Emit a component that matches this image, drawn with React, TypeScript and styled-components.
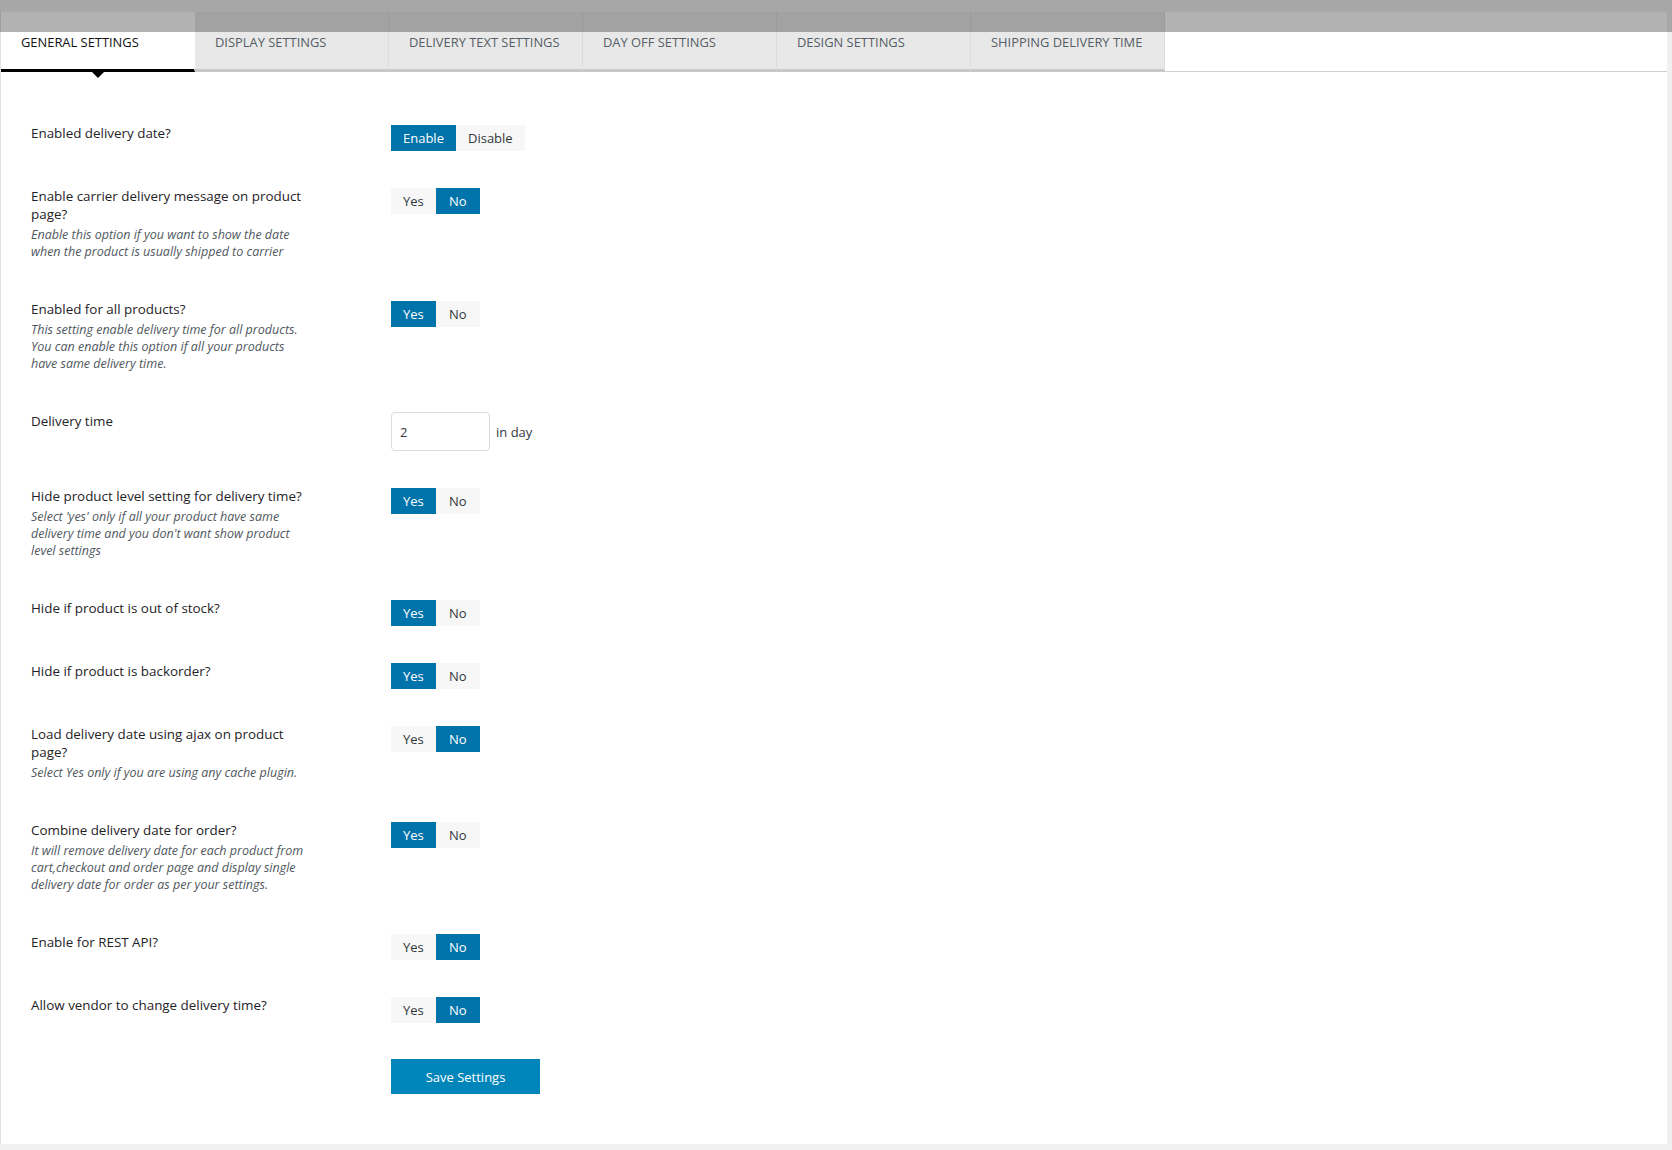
import React from "react";
import styled, { createGlobalStyle, css } from "styled-components";

const GlobalStyle = createGlobalStyle`
  html, body {
    margin: 0;
    padding: 0;
    background: #f0f0f1;
  }
  body {
    font-family: "Open Sans", "Noto Sans", Arial, sans-serif;
    color: #1f2327;
  }
  * { box-sizing: border-box; }
`;

const Page = styled.div`
  position: relative;
  padding: 12px 5px 6px 0;
  min-height: 1150px;
`;

const Overlay = styled.div`
  position: absolute;
  top: 0;
  left: 0;
  right: 0;
  height: 32px;
  background: rgba(0, 0, 0, 0.3);
  pointer-events: none;
  z-index: 10;
`;

const Panel = styled.div`
  background: #fff;
  border-left: 1px solid #e2e2e2;
  min-height: 1132px;
`;

const TabBar = styled.div`
  display: flex;
  border-bottom: 1px solid #d0d0d0;
  height: 60px;
`;

const Tab = styled.div<{ $active?: boolean }>`
  position: relative;
  width: 194px;
  height: 60px;
  padding: 21px 0 0 20px;
  font-size: 12.9px;
  line-height: 18px;
  text-transform: uppercase;
  white-space: nowrap;
  border-bottom: 3px solid #c8c8c8;
  border-right: 1px solid #dcdcdc;
  background: #e8e8e8;
  color: #555d66;
  margin-bottom: -1px;
  ${(p) =>
    p.$active &&
    css`
      background: #fff;
      color: #111;
      border-bottom-color: #000;
      border-right-color: #fff;
      &::after {
        content: "";
        position: absolute;
        left: 50%;
        bottom: -9px;
        margin-left: -6px;
        border-left: 6px solid transparent;
        border-right: 6px solid transparent;
        border-top: 6px solid #000;
      }
    `}
`;

const Form = styled.div`
  padding: 32px 0 0 30px;
`;

const Row = styled.div`
  display: grid;
  grid-template-columns: 360px 1fr;
  align-items: start;
`;

const LabelCell = styled.div`
  padding: 20px 0;
`;

const Label = styled.div`
  font-size: 13.4px;
  line-height: 18px;
  color: #1f2327;
`;

const Desc = styled.div`
  margin-top: 3px;
  font-size: 12.5px;
  line-height: 17px;
  font-style: italic;
  color: #50575e;
`;

const ControlCell = styled.div`
  padding: 21px 0 16px;
  display: flex;
  align-items: center;
`;

const Toggle = styled.div`
  display: inline-flex;
  height: 26px;
`;

const ToggleBtn = styled.span<{ $on?: boolean }>`
  display: inline-block;
  min-width: 44px;
  height: 26px;
  line-height: 26px;
  padding: 0 12px;
  text-align: center;
  font-size: 13px;
  background: ${(p) => (p.$on ? "#0073aa" : "#f7f7f7")};
  color: ${(p) => (p.$on ? "#fff" : "#32373c")};
`;

const NumberInput = styled.input`
  margin-top: -1px;
  width: 99px;
  height: 39px;
  border: 1px solid #dcdcde;
  border-radius: 4px;
  padding: 0 8px;
  font-family: inherit;
  font-size: 13px;
  color: #32373c;
  background: #fff;
  outline: none;
`;

const Unit = styled.span`
  margin-left: 6px;
  font-size: 13px;
  color: #32373c;
`;

const SaveRow = styled.div`
  padding: 20px 0 0 360px;
`;

const SaveButton = styled.button`
  width: 149px;
  height: 35px;
  border: none;
  border-radius: 0;
  background: #0085ba;
  color: #fff;
  font-family: inherit;
  font-size: 13px;
  cursor: pointer;
`;

type Setting = {
  label: string[];
  desc?: string[];
  options?: [string, string];
  value?: 0 | 1;
  input?: string;
};

const tabs = [
  "General Settings",
  "Display Settings",
  "Delivery Text Settings",
  "Day Off Settings",
  "Design Settings",
  "Shipping Delivery Time",
];

const settings: Setting[] = [
  { label: ["Enabled delivery date?"], options: ["Enable", "Disable"], value: 0 },
  {
    label: ["Enable carrier delivery message on product", "page?"],
    desc: ["Enable this option if you want to show the date", "when the product is usually shipped to carrier"],
    options: ["Yes", "No"],
    value: 1,
  },
  {
    label: ["Enabled for all products?"],
    desc: [
      "This setting enable delivery time for all products.",
      "You can enable this option if all your products",
      "have same delivery time.",
    ],
    options: ["Yes", "No"],
    value: 0,
  },
  { label: ["Delivery time"], input: "2" },
  {
    label: ["Hide product level setting for delivery time?"],
    desc: [
      "Select 'yes' only if all your product have same",
      "delivery time and you don't want show product",
      "level settings",
    ],
    options: ["Yes", "No"],
    value: 0,
  },
  { label: ["Hide if product is out of stock?"], options: ["Yes", "No"], value: 0 },
  { label: ["Hide if product is backorder?"], options: ["Yes", "No"], value: 0 },
  {
    label: ["Load delivery date using ajax on product", "page?"],
    desc: ["Select Yes only if you are using any cache plugin."],
    options: ["Yes", "No"],
    value: 1,
  },
  {
    label: ["Combine delivery date for order?"],
    desc: [
      "It will remove delivery date for each product from",
      "cart,checkout and order page and display single",
      "delivery date for order as per your settings.",
    ],
    options: ["Yes", "No"],
    value: 0,
  },
  { label: ["Enable for REST API?"], options: ["Yes", "No"], value: 1 },
  { label: ["Allow vendor to change delivery time?"], options: ["Yes", "No"], value: 1 },
];

const Lines: React.FC<{ lines: string[] }> = ({ lines }) => (
  <>
    {lines.map((l, i) => (
      <React.Fragment key={i}>
        {i > 0 && <br />}
        {l}
      </React.Fragment>
    ))}
  </>
);

export default function App() {
  return (
    <>
      <GlobalStyle />
      <Page>
        <Overlay />
        <Panel>
          <TabBar>
            {tabs.map((t, i) => (
              <Tab key={t} $active={i === 0}>
                {t}
              </Tab>
            ))}
          </TabBar>
          <Form>
            {settings.map((s, i) => (
              <Row key={i}>
                <LabelCell>
                  <Label>
                    <Lines lines={s.label} />
                  </Label>
                  {s.desc && (
                    <Desc>
                      <Lines lines={s.desc} />
                    </Desc>
                  )}
                </LabelCell>
                <ControlCell>
                  {s.input !== undefined ? (
                    <>
                      <NumberInput type="text" defaultValue={s.input} />
                      <Unit>in day</Unit>
                    </>
                  ) : (
                    <Toggle>
                      {s.options!.map((o, j) => (
                        <ToggleBtn key={o} $on={s.value === j}>
                          {o}
                        </ToggleBtn>
                      ))}
                    </Toggle>
                  )}
                </ControlCell>
              </Row>
            ))}
            <SaveRow>
              <SaveButton>Save Settings</SaveButton>
            </SaveRow>
          </Form>
        </Panel>
      </Page>
    </>
  );
}
